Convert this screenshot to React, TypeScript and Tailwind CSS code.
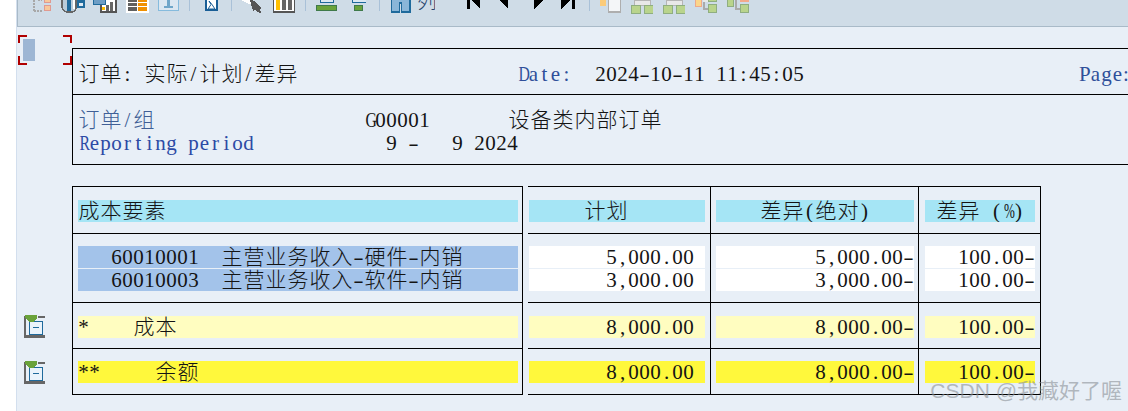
import React from "react";

const FONT = "[font-family:'Liberation_Serif','Noto_Sans_CJK_SC',serif]";

function T({ s }: { s: string }) {
  return (
    <>
      {Array.from(s).map((c, i) => {
        if (/[\u3000-\u9fff]/.test(c)) {
          return (
            <span key={i} className="inline-block w-[22px] text-center text-[21px] font-light leading-[22px]">
              {c}
            </span>
          );
        }
        const fit =
          c === "%" ? " scale-x-[0.62]" : c === "-" ? " scale-x-150" : /[GRD]/.test(c) ? " scale-x-75" : "";
        return (
          <span key={i} className={"inline-block w-[11px] text-center leading-[22px]" + fit}>
            {c === " " ? "\u00a0" : c}
          </span>
        );
      })}
    </>
  );
}

function Ic({ x, w, cls, children }: { x: number; w: number; cls: string; children: React.ReactNode }) {
  return (
    <svg className={"shrink-0 " + cls} width={w} height={14} viewBox={`${x} 0 ${w} 14`} shapeRendering="crispEdges">
      {children}
    </svg>
  );
}

function Sep({ cls }: { cls: string }) {
  return <div className={"h-[11px] w-px shrink-0 bg-[#a9c1d8] " + cls} />;
}

function TreeTop({ x }: { x: number }) {
  return (
    <>
      <rect x={x + 3} y={0} width={16} height={5} fill="#e8e8e8" stroke="#b5b5b5" />
      <rect x={x + 0.5} y={5.5} width={9} height={8} fill="#b9d48c" stroke="#8fae80" />
      <rect x={x + 13.5} y={5.5} width={9} height={8} fill="#b9d48c" stroke="#8fae80" />
    </>
  );
}

function Toolbar() {
  return (
    <div className="flex h-[27px] shrink-0 items-start overflow-hidden border-b border-l border-[#a9bac8] bg-[#cfdce7]">
      <Ic x={33} w={18} cls="ml-[15px]">
        <path d="M34 0v12M34 11h8M38 0h4" stroke="#a8a8a8" strokeWidth="2" strokeDasharray="2 1" fill="none" />
        <rect x={44.5} y={-1} width={6} height={3.5} fill="#f8c89a" stroke="#e09a90" />
        <rect x={44.5} y={5.5} width={6} height={5} fill="#f8c89a" stroke="#e09a90" />
      </Ic>
      <Ic x={61} w={24} cls="ml-[10px]">
        <path d="M62 0v7q1 5 6 5h3q5 0 5-5V0" fill="#b9cbd9" stroke="#666" strokeWidth="1.5" />
        <rect x={67} y={0} width={4} height={11} fill="#1f6a9c" />
        <rect x={73} y={0} width={2} height={9} fill="#ffffff" />
        <rect x={77} y={0} width={8} height={8} fill="#1f6a9c" />
        <rect x={79} y={3} width={4} height={3} fill="#dfeaf3" />
      </Ic>
      <Ic x={93} w={24} cls="ml-[8px]">
        <rect x={100} y={0} width={17} height={13} fill="#555" />
        <rect x={102} y={0} width={13} height={11} fill="#fff" />
        <rect x={93} y={0} width={13} height={5} fill="#1f6a9c" />
        <rect x={94} y={0} width={11} height={3.5} fill="#6d9dc4" />
        <rect x={102} y={7} width={3} height={3} fill="#ffc000" />
        <rect x={106} y={5} width={3} height={6} fill="#666" />
        <rect x={110} y={2} width={3} height={9} fill="#666" />
      </Ic>
      <Ic x={126} w={23} cls="ml-[9px]">
        <rect x={126} y={0} width={23} height={13} fill="#fff" />
        <rect x={128} y={0} width={9} height={2} fill="#606060" />
        <rect x={128} y={3} width={9} height={3} fill="#606060" />
        <rect x={128} y={7} width={9} height={4} fill="#606060" />
        <rect x={138} y={0} width={9} height={2} fill="#f09000" />
        <rect x={138} y={3} width={9} height={3} fill="#f09000" />
        <rect x={138} y={7} width={9} height={4} fill="#f09000" />
      </Ic>
      <Ic x={157} w={22} cls="ml-[8px]">
        <rect x={158} y={-2} width={20} height={12} fill="#dbe7f1" stroke="#86bbdd" />
        <rect x={167} y={0} width={3} height={6} fill="#6fa6c9" />
        <rect x={164} y={6} width={9} height={2} fill="#6fa6c9" />
      </Ic>
      <Sep cls="ml-[10px]" />
      <Ic x={205} w={13} cls="ml-[15px]">
        <rect x={205} y={0} width={13} height={11} fill="#1a5e96" />
        <rect x={207} y={0} width={9} height={9} fill="#fff" />
        <path d="M209 1l3 3.5 3 4.5h-7l3-4.5z" fill="none" stroke="#1a5e96" strokeWidth="1" shapeRendering="auto" />
      </Ic>
      <Sep cls="ml-[13px]" />
      <Ic x={241} w={22} cls="ml-[9px]">
        <path d="M241 0h9l2 3-3 1z" fill="#fff" />
        <path d="M250 0l5 1 6 7-2 2 3 2-2 1-5-3-2 1z" fill="#555" />
      </Ic>
      <Ic x={273} w={22} cls="ml-[10px]">
        <rect x={273} y={0} width={22} height={13} fill="#555" />
        <rect x={274} y={0} width={20} height={11} fill="#fff" />
        <rect x={276} y={0} width={4} height={10} fill="#ffc000" />
        <rect x={282} y={0} width={4} height={10} fill="#666" />
        <rect x={288} y={0} width={4} height={10} fill="#666" />
      </Ic>
      <Sep cls="ml-[10px]" />
      <Ic x={316} w={21} cls="ml-[10px]">
        <rect x={320} y={-2} width={13} height={4} fill="#dbe7f1" stroke="#1f6a9c" />
        <rect x={316.5} y={5.5} width={20} height={5} fill="#6aa23a" stroke="#3f7a4a" />
      </Ic>
      <Ic x={351} w={15} cls="ml-[14px]">
        <rect x={352} y={-2} width={14} height={4} fill="#dbe7f1" stroke="#1f6a9c" />
        <rect x={354.5} y={5.5} width={8} height={5} fill="#6aa23a" stroke="#3f7a4a" />
      </Ic>
      <Sep cls="ml-[13px]" />
      <Ic x={391} w={20} cls="ml-[11px]">
        <path d="M391.5 0v12h8V3h2v9h8.5V0" fill="#8ab6d8" stroke="#1f6a9c" strokeWidth="1.5" />
      </Ic>
      <div className="ml-[6px] h-[10px] w-[18px] shrink-0 overflow-hidden text-[20px] font-light leading-[0px] text-[#26456e]">
        <span className="block translate-y-[2px]">列</span>
      </div>
      <Ic x={467} w={13} cls="ml-[32px]">
        <rect x={467} y={0} width={3} height={9} fill="#000" />
        <polygon points="471,0 480,0 480,9" fill="#000" />
      </Ic>
      <Ic x={499} w={9} cls="ml-[19px]">
        <polygon points="499,0 508,0 508,9" fill="#000" />
      </Ic>
      <Ic x={534} w={9} cls="ml-[26px]">
        <polygon points="534,0 543,0 534,9" fill="#000" />
      </Ic>
      <Ic x={561} w={14} cls="ml-[18px]">
        <polygon points="561,0 571,0 561,9" fill="#000" />
        <rect x={572} y={0} width={3} height={9} fill="#000" />
      </Ic>
      <Sep cls="ml-[14px]" />
      <Ic x={600} w={21} cls="ml-[10px]">
        <rect x={600} y={0} width={6} height={6} fill="#fbcb7a" />
        <rect x={608.5} y={-2} width={12} height={14} fill="#f4f6f8" stroke="#aeaeae" strokeWidth="1.5" />
      </Ic>
      <Ic x={631} w={22} cls="ml-[10px]">
        <TreeTop x={631} />
      </Ic>
      <Ic x={663} w={22} cls="ml-[10px]">
        <TreeTop x={663} />
      </Ic>
      <Ic x={695} w={22} cls="ml-[10px]">
        <rect x={695.5} y={-1} width={6} height={7} fill="#fbd68a" stroke="#eda98a" />
        <path d="M704 0v9h4" fill="none" stroke="#aaa" strokeWidth="2" />
        <rect x={703} y={0} width={5} height={2} fill="#e8e8e8" />
        <rect x={708.5} y={-2} width={8} height={3} fill="#b9d48c" stroke="#8fae80" />
        <rect x={708.5} y={4.5} width={8} height={8} fill="#b9d48c" stroke="#8fae80" />
      </Ic>
      <Ic x={727} w={22} cls="ml-[10px]">
        <rect x={727.5} y={-1} width={6} height={7} fill="#b9d48c" stroke="#8fae80" />
        <path d="M736 0v9h4" fill="none" stroke="#aaa" strokeWidth="2" />
        <rect x={740} y={0} width={9} height={2} fill="#f3a98a" />
        <rect x={740.5} y={4.5} width={8} height={8} fill="#b9d48c" stroke="#8fae80" />
      </Ic>
    </div>
  );
}

function CollapseIcon() {
  return (
    <svg className="ml-[7px]" width="21" height="23" viewBox="0 0 21 23" shapeRendering="crispEdges">
      <path d="M1 1v20.5h20" fill="none" stroke="#666" strokeWidth="2.5" />
      <path d="M14 2h7" fill="none" stroke="#666" strokeWidth="2" />
      <rect x="5.5" y="6.5" width="13" height="13" fill="#eaf3fb" stroke="#1f6a9c" strokeWidth="1.5" />
      <rect x="9" y="12" width="6" height="1" fill="#1f6a9c" />
      <path d="M1 0h12v3l-3 4H5L1 3z" fill="#6aa23a" />
    </svg>
  );
}

const COL1 = "w-[451px] border-x border-b border-black pl-[5px] pr-[4px]";
const COL2 = "ml-[5px] w-[183px] border-r border-b border-black pl-px pr-[5px]";
const COL3 = "w-[208px] border-r border-b border-black pl-[5px] pr-[4px]";
const COL4 = "w-[122px] border-r border-b border-black pl-[6px] pr-[5px]";

function Band({ bg, s, end }: { bg: string; s: string; end?: boolean }) {
  return (
    <div className={"flex h-[22px] items-start overflow-hidden whitespace-pre " + bg + (end ? " justify-end" : "")}>
      <div className="h-[22px]">
        <T s={s} />
      </div>
    </div>
  );
}

function Row({
  pad,
  top,
  icon,
  cells,
}: {
  pad: string;
  top?: boolean;
  icon?: string;
  cells: React.ReactNode[];
}) {
  const t = top ? " border-t" : "";
  return (
    <div className="flex">
      <div className={"w-[55px] shrink-0 " + pad}>{icon && <div className={icon}><CollapseIcon /></div>}</div>
      <div className={"shrink-0 " + COL1 + t + " " + pad}>{cells[0]}</div>
      <div className={"shrink-0 " + COL2 + t + " " + pad}>{cells[1]}</div>
      <div className={"shrink-0 " + COL3 + t + " " + pad}>{cells[2]}</div>
      <div className={"shrink-0 " + COL4 + t + " " + pad}>{cells[3]}</div>
    </div>
  );
}

function Two({ a, b, bg, end }: { a: string; b: string; bg: string; end?: boolean }) {
  return (
    <div className="flex flex-col gap-px">
      <Band bg={bg} s={a} end={end} />
      <Band bg={bg} s={b} end={end} />
    </div>
  );
}

export default function App() {
  const head = "bg-[#a5e5f5]";
  const lite = "bg-[#fffdc0]";
  const strong = "bg-[#fff83c]";
  return (
    <div className={"flex h-[411px] w-[1128px] overflow-hidden bg-white text-[21px] leading-[22px] text-[#141414] " + FONT}>
      <div className="w-4 shrink-0 bg-white" />
      <div className="w-px shrink-0 bg-[#d3dfee]" />
      <div className="relative flex min-w-0 flex-1 flex-col bg-[#e8eff7]">
        <Toolbar />

        <svg className="absolute left-px top-[35px]" width="54" height="30" viewBox="0 0 54 30" shapeRendering="crispEdges">
          <path d="M9 1H1v7M45 1h8v7M1 21v8h8M45 29h8v-8" fill="none" stroke="#b00000" strokeWidth="2" />
          <rect x="5" y="4" width="12" height="22" fill="#9db6d4" />
        </svg>

        <div className="mt-[21px] ml-[55px] flex flex-col border-l border-black">
          <div className="flex h-[47px] whitespace-nowrap border-y border-black pl-[5px] pt-[14px]">
            <div className="w-[439px] shrink-0"><T s="订单: 实际/计划/差异" /></div>
            <div className="w-[78px] shrink-0 text-[#2f4f9a]"><T s="Date:" /></div>
            <div className="w-[484px] shrink-0"><T s="2024-10-11 11:45:05" /></div>
            <div className="text-[#2f4f9a]"><T s="Page" /><span className="inline-block w-[5px] leading-[22px]">:</span></div>
          </div>
          <div className="h-[70px] whitespace-nowrap border-b border-black pl-[5px] pt-[14px]">
            <div className="flex h-[23px]">
              <div className="w-[286px] shrink-0 text-[#3f5f96]"><T s="订单/组" /></div>
              <div className="w-[144px] shrink-0"><T s="G00001" /></div>
              <div className="shrink-0"><T s="设备类内部订单" /></div>
            </div>
            <div className="flex h-[23px]">
              <div className="w-[308px] shrink-0 text-[#2c4aa5]"><T s="Reporting period" /></div>
              <div className="shrink-0"><T s="9 -   9 2024" /></div>
            </div>
          </div>
        </div>

        <div className="mt-[21px] flex flex-col">
          <Row
            top
            pad="pt-[13px] pb-[11px]"
            cells={[
              <Band bg={head} s="成本要素" />,
              <Band bg={head} s="     计划" />,
              <Band bg={head} s="    差异(绝对)" />,
              <Band bg={head} s=" 差异 (%)" />,
            ]}
          />
          <Row
            pad="pt-[12px] pb-[11px]"
            cells={[
              <Two bg="bg-[#a3c3ea]" a="   60010001  主营业务收入-硬件-内销" b="   60010003  主营业务收入-软件-内销" />,
              <Two bg="bg-white" end a="5,000.00 " b="3,000.00 " />,
              <Two bg="bg-white" end a="5,000.00-" b="3,000.00-" />,
              <Two bg="bg-white" end a="100.00-" b="100.00-" />,
            ]}
          />
          <Row
            icon="-mt-px"
            pad="pt-[13px] pb-[10px]"
            cells={[
              <Band bg={lite} s="*    成本" />,
              <Band bg={lite} end s="8,000.00 " />,
              <Band bg={lite} end s="8,000.00-" />,
              <Band bg={lite} end s="100.00-" />,
            ]}
          />
          <Row
            pad="pt-[12px] pb-[11px]"
            icon="mt-0"
            cells={[
              <Band bg={strong} s="**     余额" />,
              <Band bg={strong} end s="8,000.00 " />,
              <Band bg={strong} end s="8,000.00-" />,
              <Band bg={strong} end s="100.00-" />,
            ]}
          />
        </div>

        <div className="absolute right-[6px] top-[379px] whitespace-pre font-['Liberation_Sans','Noto_Sans_CJK_SC',sans-serif] text-[21px] leading-[24px] text-[#8a8f96]/60">
          CSDN @我藏好了喔
        </div>
      </div>
    </div>
  );
}
